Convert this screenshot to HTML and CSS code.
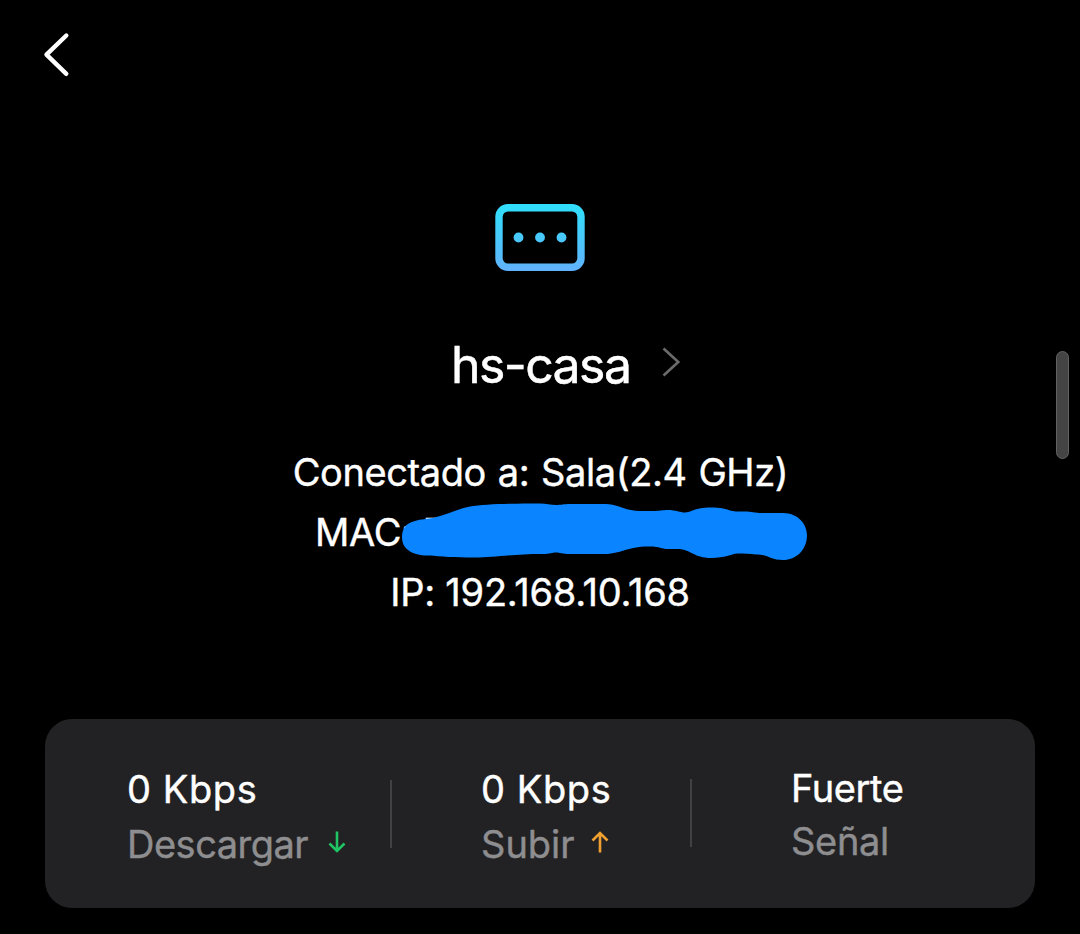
FILE: index.html
```html
<!DOCTYPE html>
<html lang="es">
<head>
    <meta charset="UTF-8">
    <meta name="viewport" content="width=device-width, initial-scale=1.0">
    <title>hs-casa</title>
    <link rel="stylesheet" href="styles.css">
</head>
<body>
    <div class="container">
        <header class="topbar">
            <svg class="back" width="28" height="46" viewBox="0 0 28 46">
                <path d="M24.3 3.5 L4.5 22.7 L24.3 41.8"/>
            </svg>
        </header>
        <div class="device">
            <svg class="device-icon" width="90" height="68" viewBox="0 0 90 68">
                <defs>
                    <linearGradient id="frame" gradientUnits="userSpaceOnUse" x1="0" y1="0" x2="0" y2="68">
                        <stop offset="0" stop-color="#2fe0fb"/>
                        <stop offset="1" stop-color="#62b1fd"/>
                    </linearGradient>
                </defs>
                <rect x="4" y="3.8" width="82" height="59.5" rx="9" fill="none" stroke="url(#frame)" stroke-width="7.4"/>
                <g fill="url(#frame)">
                    <circle cx="23.5" cy="33.5" r="4.9"/>
                    <circle cx="45" cy="33.5" r="4.9"/>
                    <circle cx="66.5" cy="33.5" r="4.9"/>
                </g>
            </svg>
            <div class="name-row">
                <h1 class="name">hs-casa</h1>
                <svg class="chevron" width="20" height="32" viewBox="0 0 20 32">
                    <path d="M2.5 2.5 L17.3 16 L2.5 29.5"/>
                </svg>
            </div>
            <div class="info">
                <p class="network">Conectado a: Sala(2.4 GHz)</p>
                <p class="mac">MAC: 7
                    <svg class="scribble" width="410" height="60" viewBox="400 502 410 60">
                        <path d="M402 537 C402 529 406 523 415 521 C421 519 427 519 433 518 C446 515 457 509 470 506.5 C485 504 515 503.5 540 503.5 C546 503.5 551 505 556 505 C561 505 564 504 570 504 L606 504 C618 504 625 511 640 511 L653 511 C660 511 662 510 668 510 C676 510 680 512.5 685 512.5 C691 512.5 694 507.5 711 507.5 C728 507.5 728 511.5 738 511.5 L745 511.5 C751 511.5 755 513 762 513 L783 513 C798 513 807 524 807 535 C807 550 796 560 783 560 C770 560 769 554.5 756 554.5 C750 553.5 745 554 738 553.5 C730 554 726 558 711 558 C694 558 690 549 678 549 L668 549 C661 549 660 546.5 650 546.5 C628 546 621 554 604 554 L570 554 C562 554 560 552.5 556 552.5 C552 552.5 550 554 543 554 C510 554 495 557.5 474 557.5 C455 557.5 440 556.5 430 555.5 C412 556 402 549 402 537 Z"/>
                    </svg>
                </p>
                <p class="ip">IP: 192.168.10.168</p>
            </div>
        </div>
        <div class="stats">
            <div class="stat download">
                <div class="value">0 Kbps</div>
                <div class="label"><span class="label-down">Descargar</span>
                    <svg class="arrow down" width="18" height="24" viewBox="0 0 18 24">
                        <path d="M9 1.5 V21 M1.5 13.5 L9 21 L16.5 13.5"/>
                    </svg>
                </div>
            </div>
            <div class="stat upload">
                <div class="value">0 Kbps</div>
                <div class="label"><span class="label-up">Subir</span>
                    <svg class="arrow up" width="18" height="24" viewBox="0 0 18 24">
                        <path d="M9 22.5 V3 M1.5 10.5 L9 3 L16.5 10.5"/>
                    </svg>
                </div>
            </div>
            <div class="stat signal">
                <div class="value">Fuerte</div>
                <div class="label"><span class="label-signal">Señal</span></div>
            </div>
        </div>
        <div class="scroll-thumb"></div>
    </div>
</body>
</html>
```
FILE: styles.css
```css
* {
    box-sizing: border-box;
}
body {
    margin: 0;
    background-color: #000;
    color: #fff;
    font-family: Inter, sans-serif;
    -webkit-text-stroke: 0.4px currentColor;
}
h1, p {
    margin: 0;
    font-weight: 400;
}
svg {
    display: block;
    flex-shrink: 0;
}
.container {
    position: relative;
    width: 1080px;
    height: 934px;
    overflow: hidden;
}
.topbar {
    height: 204px;
    padding: 32px 0 0 42px;
}
.back path {
    fill: none;
    stroke: #fff;
    stroke-width: 4.4;
    stroke-linecap: round;
    stroke-linejoin: round;
}
.device {
    display: flex;
    flex-direction: column;
    align-items: center;
    height: 515px;
}
.name-row {
    display: flex;
    align-items: center;
    gap: 30px;
    width: 630px;
    height: 70px;
    margin-top: 58px;
    padding-left: 226px;
}
.name {
    width: 180px;
    font-size: 50px;
    line-height: 70px;
    letter-spacing: -1.6px;
    white-space: nowrap;
    -webkit-text-stroke-width: 0.5px;
}
.chevron {
    margin-bottom: 6px;
}
.chevron path {
    fill: none;
    stroke: #6b6b6b;
    stroke-width: 2.6;
}
.info {
    display: flex;
    flex-direction: column;
    align-items: center;
    margin-top: 42px;
    font-size: 38px;
    line-height: 60px;
    letter-spacing: -0.25px;
    white-space: nowrap;
}
.network {
    letter-spacing: -0.4px;
    word-spacing: 1.5px;
    padding-left: 1px;
}
.mac {
    position: relative;
    width: 450px;
    word-spacing: 2px;
}
.scribble {
    position: absolute;
    left: 85px;
    top: 0;
}
.scribble path {
    fill: #0b84ff;
}
.stats {
    display: grid;
    grid-template-columns: 346px 300px 344px;
    width: 990px;
    height: 189px;
    margin-left: 45px;
    background-color: #222224;
    border-radius: 27px;
}
.stat {
    position: relative;
    padding-top: 43px;
    font-size: 38px;
    line-height: 54px;
    white-space: nowrap;
}
/* short divider between columns */
.download::after,
.upload::after {
    content: "";
    position: absolute;
    right: -1px;
    top: 61px;
    width: 2px;
    height: 68px;
    background-color: #414143;
}
.upload::after {
    top: 60px;
}
.download {
    padding-left: 82px;
}
.upload {
    padding-left: 90px;
}
.value {
    letter-spacing: 0.6px;
}
.signal {
    padding-top: 42px;
    padding-left: 100px;
}
.signal .value {
    letter-spacing: -0.4px;
}
.label {
    display: flex;
    align-items: center;
    color: #8e8e90;
}
.download .label,
.upload .label {
    margin-top: 1px;
}
.label-down {
    letter-spacing: -0.5px;
}
.label-signal {
    letter-spacing: -0.3px;
}
.signal .label {
    margin-top: -1px;
}
.arrow {
    margin-left: 20px;
    margin-bottom: 4px;
}
.up {
    margin-left: 16px;
}
.arrow path {
    fill: none;
    stroke-width: 2.6;
}
.down path {
    stroke: #20c464;
}
.up path {
    stroke: #f0a030;
}
.scroll-thumb {
    position: absolute;
    left: 1056px;
    top: 351px;
    width: 13px;
    height: 108px;
    background-color: #444;
    border: 1px solid #626262;
    border-radius: 7px;
}
```
